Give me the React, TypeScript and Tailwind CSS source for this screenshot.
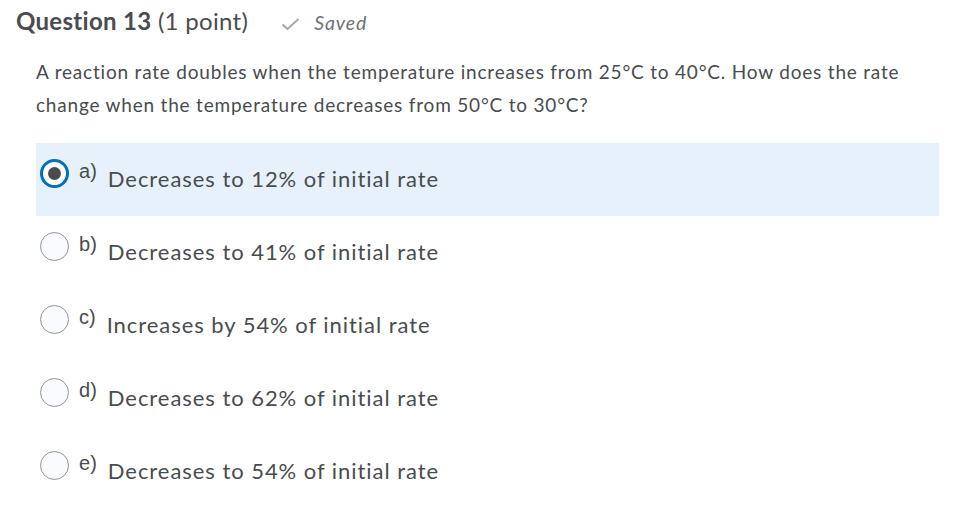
import { useState } from 'react';

const OPTIONS = [
  { key: 'a', text: 'Decreases to 12% of initial rate' },
  { key: 'b', text: 'Decreases to 41% of initial rate' },
  { key: 'c', text: 'Increases by 54% of initial rate' },
  { key: 'd', text: 'Decreases to 62% of initial rate' },
  { key: 'e', text: 'Decreases to 54% of initial rate' },
];

function Radio({ checked }: { checked: boolean }) {
  return checked ? (
    <span className="flex h-[29px] w-[29px] shrink-0 -translate-y-[6px] items-center justify-center rounded-full border-[3px] border-[#006fbf] bg-white">
      <span className="h-[13px] w-[13px] rounded-full bg-[#494c4e]" />
    </span>
  ) : (
    <span className="h-[29px] w-[29px] shrink-0 -translate-y-[6px] rounded-full border border-[#8f9396] bg-[#f9fbff]" />
  );
}

export default function App() {
  const [selected, setSelected] = useState('a');

  return (
    <div className="min-h-screen bg-white text-[#494c4e] font-['Lato',sans-serif]">
      <div className="flex items-baseline pl-4 pt-[6px]">
        <h2 className="text-[24px] leading-[30px] tracking-[0.3px]">
          <span className="font-bold">Question 13</span> (1 point)
        </h2>
        <span className="ml-[33px] flex items-baseline gap-[14px] text-[#6e7376]">
          <svg width="19" height="14" viewBox="0 0 19 14" className="self-center translate-y-[1px]">
            <path d="M1.5 7.5 L6.5 12 L17.5 2" fill="none" stroke="#a3a8ab" strokeWidth="2" />
          </svg>
          <span className="text-[19.5px] italic tracking-[0.9px]">Saved</span>
        </span>
      </div>

      <p className="mt-[18px] max-w-[920px] pl-9 text-[19px] leading-[33px] tracking-[0.8px]">
        A reaction rate doubles when the temperature increases from 25°C to 40°C. How does the rate
        <br />
        change when the temperature decreases from 50°C to 30°C?
      </p>

      <div className="mt-[22px] ml-9 mr-[19px] flex flex-col">
        {OPTIONS.map(o => (
          <label
            key={o.key}
            onClick={() => setSelected(o.key)}
            className={`flex h-[73px] cursor-pointer items-center pl-1 ${selected === o.key ? 'bg-[#e6f1fc]' : ''}`}
          >
            <Radio checked={selected === o.key} />
            <span className="ml-[10px] -translate-y-[9px] font-['Liberation_Sans',sans-serif] text-[20px]">{o.key})</span>
            <span className="ml-[11px] -translate-y-[1px] text-[22px] tracking-[0.95px]">{o.text}</span>
          </label>
        ))}
      </div>
    </div>
  );
}
